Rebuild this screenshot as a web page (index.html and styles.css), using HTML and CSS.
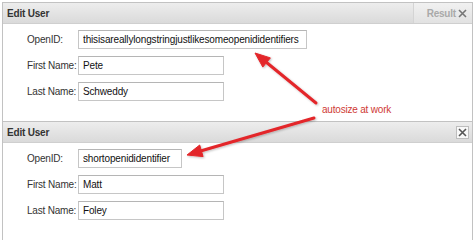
FILE: index.html
```html
<!DOCTYPE html>
<html lang="en">
<head>
    <meta charset="UTF-8">
    <title>Edit User</title>
    <link rel="stylesheet" href="styles.css">
</head>
<body>
    <div class="page">
        <section class="panel">
            <header class="panel-head">
                <span class="panel-title">Edit User</span>
                <span class="result-tab">
                    Result
                    <svg class="close-x" width="9" height="9" viewBox="0 0 9 9"><path d="M1 1L8 8M8 1L1 8"/></svg>
                </span>
            </header>
            <form class="panel-body">
                <label for="openid1">OpenID:</label>
                <input type="text" id="openid1" class="field field-long" value="thisisareallylongstringjustlikesomeopenididentifiers">
                <label for="first1">First Name:</label>
                <input type="text" id="first1" class="field" value="Pete">
                <label for="last1">Last Name:</label>
                <input type="text" id="last1" class="field" value="Schweddy">
            </form>
        </section>
        <section class="panel panel-next">
            <header class="panel-head">
                <span class="panel-title">Edit User</span>
                <span class="close-box">
                    <svg class="close-x" width="9" height="9" viewBox="0 0 9 9"><path d="M1 1L8 8M8 1L1 8"/></svg>
                </span>
            </header>
            <form class="panel-body">
                <label for="openid2">OpenID:</label>
                <input type="text" id="openid2" class="field field-short" value="shortopenididentifier">
                <label for="first2">First Name:</label>
                <input type="text" id="first2" class="field" value="Matt">
                <label for="last2">Last Name:</label>
                <input type="text" id="last2" class="field" value="Foley">
            </form>
        </section>

        <div class="note">autosize at work</div>
        <svg class="arrows" width="474" height="240" viewBox="0 0 474 240">
            <defs>
                <filter id="shade" x="-20%" y="-20%" width="140%" height="140%">
                    <feDropShadow dx="1" dy="1" stdDeviation="0.8" flood-color="#000" flood-opacity="0.25"/>
                </filter>
            </defs>
            <g filter="url(#shade)" fill="#e3262a" stroke="#e3262a">
                <line x1="316" y1="103" x2="266.6" y2="62.5" stroke-width="3" stroke-linecap="round"/>
                <polygon points="255,53 270.4,57.9 262.8,67.1" stroke-width="1" stroke-linejoin="round"/>
                <line x1="314" y1="118" x2="201.4" y2="150.8" stroke-width="3" stroke-linecap="round"/>
                <polygon points="187,155 199.7,145 203.1,156.6" stroke-width="1" stroke-linejoin="round"/>
            </g>
        </svg>
    </div>
</body>
</html>
```

FILE: styles.css
```css
body {
    margin: 0;
    background-color: #ffffff;
    font-family: "Liberation Sans", Arial, sans-serif;
    font-size: 10px;
    letter-spacing: -0.2px;
    color: #222;
}
.page {
    position: relative;
    width: 474px;
    height: 240px;
    padding: 2px 1px 0 2px;
    box-sizing: border-box;
    overflow: hidden;
}
.panel {
    border: 1px solid #c2c2c2;
    background-color: #ffffff;
}
.panel-next {
    margin-top: -1px;
}
.panel-head {
    display: flex;
    align-items: center;
    justify-content: space-between;
    height: 20px;
    padding-left: 4px;
    background: linear-gradient(#ededed, #dadada);
    border-bottom: 1px solid #cfcfcf;
}
.panel-title {
    font-weight: bold;
    color: #333;
}
.result-tab {
    display: flex;
    align-items: center;
    gap: 2px;
    height: 100%;
    padding: 0 5px 0 13px;
    border-left: 1px solid #d4d4d4;
    background: linear-gradient(#f1f1f1, #e2e2e2);
    font-weight: bold;
    color: #a9a9a9;
}
.close-x path {
    stroke: #777;
    stroke-width: 1.6;
    fill: none;
}
.close-box {
    display: flex;
    align-items: center;
    justify-content: center;
    width: 11px;
    height: 11px;
    margin-right: 3px;
    border: 1px solid #bdbdbd;
    background-color: #f8f8f8;
}
.close-box .close-x path {
    stroke: #555;
}
.panel-body {
    display: grid;
    grid-template-columns: 51px auto;
    row-gap: 7px;
    align-items: center;
    justify-items: start;
    padding: 6px 0 20px 24px;
}
.panel-body label {
    white-space: nowrap;
    color: #333;
}
.field {
    width: 146px;
    height: 19px;
    box-sizing: border-box;
    margin: 0;
    padding: 0 3px 0 4px;
    border: 1px solid #c6c6c6;
    border-top-color: #b5b5b5;
    font-family: inherit;
    font-size: 10px;
    letter-spacing: -0.15px;
    color: #111;
    background-color: #fff;
}
.field-long {
    width: 229px;
}
.field-short {
    width: 104px;
}
.note {
    position: absolute;
    left: 322px;
    top: 104px;
    color: #cf3a34;
}
.arrows {
    position: absolute;
    left: 0;
    top: 0;
    pointer-events: none;
}
```
